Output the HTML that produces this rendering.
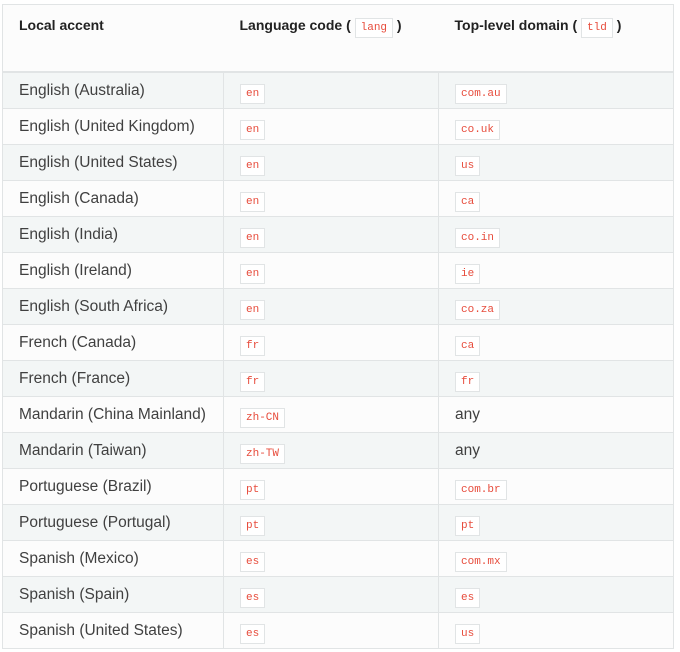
<!DOCTYPE html>
<html><head><style>
body{margin:0;background:#fff;font-family:"Liberation Sans",sans-serif;}
table{position:absolute;left:2px;top:4px;border-collapse:collapse;width:672px;table-layout:fixed;color:#404040;font-size:15.5px;border:1px solid #e1e4e5;}
th{height:54px;text-align:left;vertical-align:top;padding:12px 16px 0 16px;font-weight:bold;font-size:14px;color:#222;background:#fcfcfc;border-bottom:2px solid #e1e4e5;}
td{height:35px;padding:0 16px;border:1px solid #e1e4e5;border-top:none;vertical-align:middle;line-height:20px;}
tr:nth-child(odd) td{background:#f3f6f6;}
tr:nth-child(even) td{background:#fcfcfc;}
code{display:inline-block;vertical-align:-5px;line-height:17px;font-family:"Liberation Mono",monospace;font-size:11px;color:#e74c3c;background:#fff;border:1px solid #e1e4e5;padding:1px 5px 0;}
th code{font-weight:normal;vertical-align:0;}
</style></head><body>
<table>
<colgroup><col style="width:221px"><col style="width:215px"><col></colgroup>
<thead><tr><th>Local accent</th><th>Language code ( <code>lang</code> )</th><th>Top-level domain ( <code>tld</code> )</th></tr></thead>
<tbody>
<tr><td>English (Australia)</td><td><code>en</code></td><td><code>com.au</code></td></tr>
<tr><td>English (United Kingdom)</td><td><code>en</code></td><td><code>co.uk</code></td></tr>
<tr><td>English (United States)</td><td><code>en</code></td><td><code>us</code></td></tr>
<tr><td>English (Canada)</td><td><code>en</code></td><td><code>ca</code></td></tr>
<tr><td>English (India)</td><td><code>en</code></td><td><code>co.in</code></td></tr>
<tr><td>English (Ireland)</td><td><code>en</code></td><td><code>ie</code></td></tr>
<tr><td>English (South Africa)</td><td><code>en</code></td><td><code>co.za</code></td></tr>
<tr><td>French (Canada)</td><td><code>fr</code></td><td><code>ca</code></td></tr>
<tr><td>French (France)</td><td><code>fr</code></td><td><code>fr</code></td></tr>
<tr><td>Mandarin (China Mainland)</td><td><code>zh-CN</code></td><td>any</td></tr>
<tr><td>Mandarin (Taiwan)</td><td><code>zh-TW</code></td><td>any</td></tr>
<tr><td>Portuguese (Brazil)</td><td><code>pt</code></td><td><code>com.br</code></td></tr>
<tr><td>Portuguese (Portugal)</td><td><code>pt</code></td><td><code>pt</code></td></tr>
<tr><td>Spanish (Mexico)</td><td><code>es</code></td><td><code>com.mx</code></td></tr>
<tr><td>Spanish (Spain)</td><td><code>es</code></td><td><code>es</code></td></tr>
<tr><td>Spanish (United States)</td><td><code>es</code></td><td><code>us</code></td></tr>
</tbody></table>
</body></html>
